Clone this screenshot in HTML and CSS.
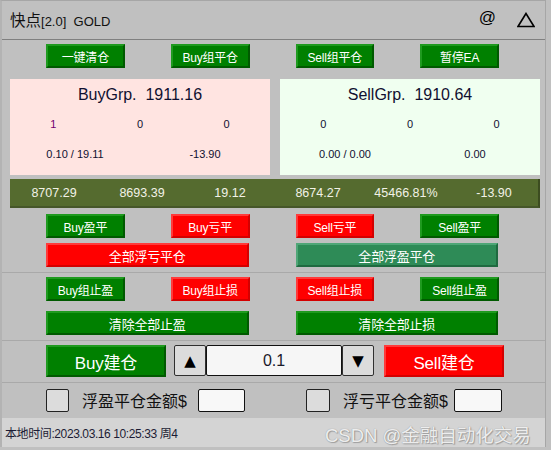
FILE: index.html
```html
<!DOCTYPE html>
<html lang="zh-CN">
<head>
<meta charset="utf-8">
<title>快点 GOLD</title>
<link rel="stylesheet" href="styles.css">
</head>
<body>
<div class="app">
  <header class="hdr">
    <span class="title"><span class="cn">快点</span>[2.0]&nbsp;&nbsp;GOLD</span>
    <span class="hdr-icons">
      <span class="at">@</span>
      <svg class="tri" width="18" height="16" viewBox="0 0 18 16"><polygon points="9,1.5 1,14.5 17,14.5" fill="none" stroke="#000" stroke-width="1.6" stroke-linejoin="miter"/></svg>
    </span>
  </header>

  <div class="row r-top">
    <div class="btn g">一键清仓</div>
    <div class="btn g">Buy组平仓</div>
    <div class="btn g">Sell组平仓</div>
    <div class="btn g">暂停EA</div>
  </div>

  <div class="panels">
    <div class="panel buy">
      <div class="ptitle">BuyGrp.&nbsp;&nbsp;1911.16</div>
      <div class="pvals three"><span class="purple">1</span><span>0</span><span>0</span></div>
      <div class="pvals two"><span>0.10 / 19.11</span><span>-13.90</span></div>
    </div>
    <div class="panel sell">
      <div class="ptitle">SellGrp.&nbsp;&nbsp;1910.64</div>
      <div class="pvals three"><span>0</span><span>0</span><span>0</span></div>
      <div class="pvals two"><span>0.00 / 0.00</span><span>0.00</span></div>
    </div>
  </div>

  <div class="stats">
    <div class="cell">8707.29</div>
    <div class="cell">8693.39</div>
    <div class="cell">19.12</div>
    <div class="cell">8674.27</div>
    <div class="cell">45466.81%</div>
    <div class="cell">-13.90</div>
  </div>

  <div class="row r-2">
    <div class="btn g">Buy盈平</div>
    <div class="btn r">Buy亏平</div>
    <div class="btn r">Sell亏平</div>
    <div class="btn g">Sell盈平</div>
  </div>

  <div class="row r-wide1">
    <div class="btn wide r">全部浮亏平仓</div>
    <div class="btn wide sg">全部浮盈平仓</div>
  </div>

  <div class="sep s1"></div>

  <div class="row r-3">
    <div class="btn g">Buy组止盈</div>
    <div class="btn r">Buy组止损</div>
    <div class="btn r">Sell组止损</div>
    <div class="btn g">Sell组止盈</div>
  </div>

  <div class="row r-wide2">
    <div class="btn wide g">清除全部止盈</div>
    <div class="btn wide g">清除全部止损</div>
  </div>

  <div class="sep s2"></div>

  <div class="row trade">
    <div class="btn big g">Buy建仓</div>
    <div class="spin">
      <div class="arrow">▲</div>
      <div class="lots">0.1</div>
      <div class="arrow">▼</div>
    </div>
    <div class="btn big r">Sell建仓</div>
  </div>

  <div class="sep s3"></div>

  <div class="row checks">
    <div class="grp">
      <div class="chk"></div>
      <div class="lbl lbl-a">浮盈平仓金额$</div>
      <div class="amt"></div>
    </div>
    <div class="grp grp-b">
      <div class="chk"></div>
      <div class="lbl lbl-b">浮亏平仓金额$</div>
      <div class="amt"></div>
    </div>
  </div>

  <footer class="foot">
    <span class="time">本地时间:2023.03.16 10:25:33 周4</span>
    <span class="wm">CSDN @金融自动化交易</span>
  </footer>
</div>
</body>
</html>
```

FILE: styles.css
```css
html, body {
  margin: 0;
  padding: 0;
  background: #c0c0c0;
}
body {
  font-family: "Liberation Sans", "Noto Sans CJK SC", sans-serif;
  color: #000;
}
.app {
  position: relative;
  width: 546px;
  height: 447px;
  box-sizing: border-box;
  border-top: 1px solid #a6a6a6;
  border-left: 2px solid #b3b3b3;
  border-right: 1px solid #a6a6a6;
  background: #c0c0c0;
  overflow: hidden;
}

/* header */
.hdr {
  height: 39px;
  box-sizing: border-box;
  border-bottom: 1px solid #808080;
  display: flex;
  align-items: center;
  justify-content: space-between;
  padding: 0 10px 2px 8px;
}
.title {
  font-size: 13px;
  color: #111;
}
.title .cn {
  font-size: 15.5px;
}
.hdr-icons {
  display: flex;
  align-items: center;
  gap: 21px;
}
.at {
  font-size: 17px;
  line-height: 1;
  margin-top: -3px;
}
.tri {
  display: block;
  margin-top: 2px;
}

/* button rows */
.row {
  display: flex;
  padding-left: 44px;
}
.r-top { margin-top: 4px; }
.r-2 { margin-top: 6px; }
.r-wide1 { margin-top: 5px; }
.r-3 { margin-top: 4px; }
.r-wide2 { margin-top: 10px; }

.btn {
  width: 80px;
  height: 24px;
  box-sizing: border-box;
  border: 2px solid;
  margin-right: 46px;
  display: flex;
  align-items: center;
  justify-content: center;
  color: #fff;
  font-size: 12px;
  letter-spacing: -0.2px;
  white-space: nowrap;
}
.btn.g {
  background: #008000;
  border-color: #1f9a1f #005a00 #005a00 #1f9a1f;
}
.btn.r {
  background: #ff0000;
  border-color: #ff3a3a #d40000 #d40000 #ff3a3a;
}
.btn.sg {
  background: #2e8b57;
  border-color: #4fa677 #1f6a40 #1f6a40 #4fa677;
}
.btn.wide {
  width: 205px;
  margin-right: 47px;
  font-size: 13px;
}

/* panels */
.panels {
  margin-top: 11px;
  padding-left: 8px;
  display: flex;
  gap: 10px;
}
.panel {
  width: 260px;
  height: 96px;
  box-sizing: border-box;
  padding-top: 6px;
  color: #101030;
}
.panel.buy { background: #ffe4e1; }
.panel.sell { background: #f0fff0; }
.ptitle {
  text-align: center;
  font-size: 16px;
  line-height: 20px;
}
.pvals {
  display: grid;
  font-size: 11px;
  line-height: 14px;
  text-align: center;
}
.pvals.three {
  grid-template-columns: repeat(3, 1fr);
  margin-top: 12px;
}
.pvals.two {
  grid-template-columns: repeat(2, 1fr);
  margin-top: 16px;
}
.purple { color: #700070; }

/* stats bar */
.stats {
  margin: 4px 0 0 8px;
  width: 530px;
  height: 29px;
  box-sizing: border-box;
  background: #556b2f;
  border-right: 2px solid #3c4c20;
  border-bottom: 2px solid #46572a;
  display: flex;
}
.cell {
  width: 88px;
  display: flex;
  align-items: center;
  justify-content: center;
  color: #f2f2e6;
  font-size: 12.5px;
}

/* separators */
.sep {
  height: 1px;
  background: #a9a9a9;
}
.s1 { margin-top: 5px; }
.s2 { margin-top: 5px; }
.s3 { margin-top: 5px; }

/* trade row */
.trade {
  margin-top: 4px;
  align-items: flex-start;
}
.btn.big {
  width: 120px;
  height: 32px;
  margin-right: 0;
  font-size: 17px;
}
.spin {
  display: flex;
  margin-left: 8px;
  margin-right: 10px;
}
.arrow {
  width: 32px;
  height: 31px;
  box-sizing: border-box;
  border: 1px solid #303030;
  border-radius: 2px;
  background: #dcdcdc;
  display: flex;
  align-items: center;
  justify-content: center;
  font-size: 15px;
  font-family: "DejaVu Sans", sans-serif;
}
.lots {
  width: 136px;
  height: 31px;
  box-sizing: border-box;
  border: 1.5px solid #111;
  border-radius: 2px;
  background: #f6f6f6;
  display: flex;
  align-items: center;
  justify-content: center;
  font-size: 16px;
  color: #1a1a2a;
}

/* check row */
.checks {
  margin-top: 5px;
}
.grp {
  display: flex;
  align-items: center;
}
.grp-b {
  margin-left: 61px;
}
.chk {
  width: 23px;
  height: 23px;
  box-sizing: border-box;
  border: 1px solid #222;
  border-radius: 2px;
  background: #dcdcdc;
}
.lbl {
  margin-left: 13px;
  font-size: 16px;
  color: #111;
  white-space: nowrap;
}
.lbl-a { width: 116px; }
.lbl-b { width: 111px; }
.amt {
  width: 47px;
  height: 23px;
  box-sizing: border-box;
  border: 1px solid #111;
  border-radius: 2px;
  background: #f8f8f8;
}
.grp-b .chk { width: 24px; }
.grp-b .amt { width: 48px; }

/* footer */
.foot {
  position: relative;
  margin-top: 6px;
  margin-left: -2px;
  height: 29px;
  background: #d4d4d4;
  display: flex;
  align-items: center;
  padding-left: 5px;
}
.time {
  font-size: 12px;
  letter-spacing: -0.4px;
  color: #1c1c34;
}
.wm {
  position: absolute;
  left: 325px;
  top: 3px;
  font-size: 18.5px;
  color: rgba(250, 250, 250, 0.9);
  text-shadow: 0 0 1px #8a8a8a, 1px 1px 1px rgba(0, 0, 0, 0.25);
  white-space: nowrap;
}
```
